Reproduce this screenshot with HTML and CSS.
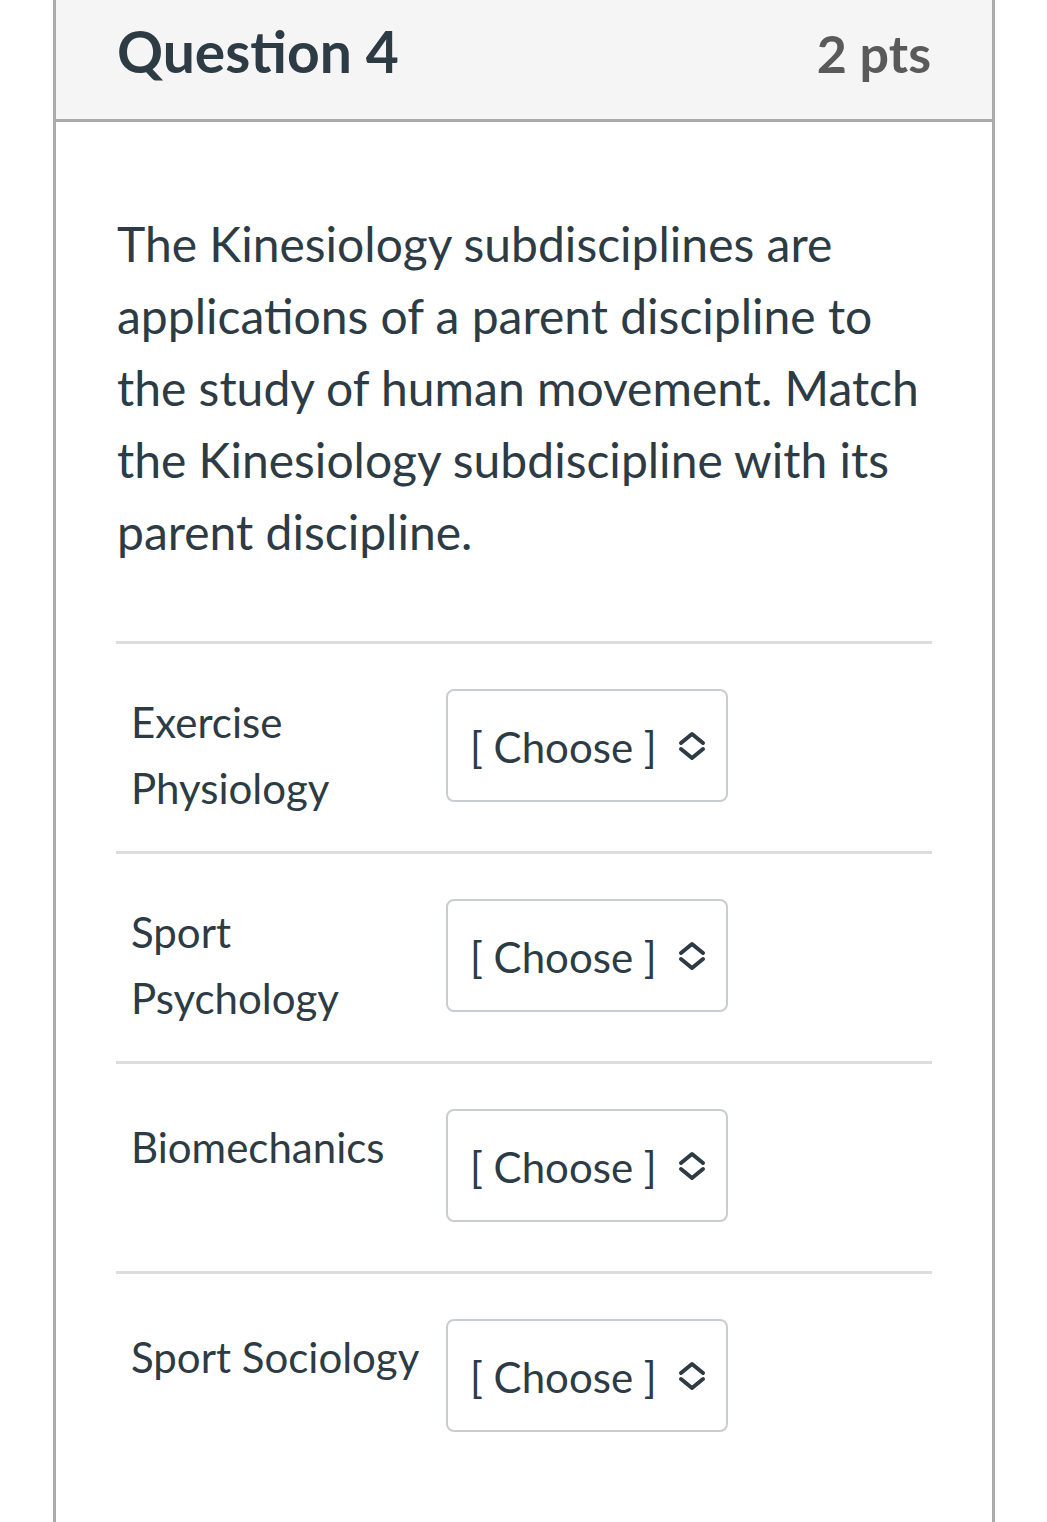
FILE: index.html
```html
<!DOCTYPE html>
<html lang="en">
<head>
<meta charset="utf-8">
<title>Question 4</title>
<link rel="stylesheet" href="styles.css">
</head>
<body>
<div class="question">
  <div class="q-header">
    <h2 class="q-title">Question 4</h2>
    <div class="q-points">2 pts</div>
  </div>
  <div class="q-body">
    <p class="q-text">The Kinesiology subdisciplines are applications of a parent discipline to the study of human movement. Match the Kinesiology subdiscipline with its parent discipline.</p>
    <div class="answers">
      <div class="answer">
        <div class="answer-label">Exercise Physiology</div>
        <div class="select"><span class="select-text">[ Choose ]</span><svg class="chev" viewBox="0 0 28 30" width="28" height="30"><path d="M3 12 L14 3 L25 12 M3 18 L14 27 L25 18" fill="none" stroke="#2d3b45" stroke-width="4" stroke-linecap="round" stroke-linejoin="round"/></svg></div>
      </div>
      <div class="answer">
        <div class="answer-label">Sport Psychology</div>
        <div class="select"><span class="select-text">[ Choose ]</span><svg class="chev" viewBox="0 0 28 30" width="28" height="30"><path d="M3 12 L14 3 L25 12 M3 18 L14 27 L25 18" fill="none" stroke="#2d3b45" stroke-width="4" stroke-linecap="round" stroke-linejoin="round"/></svg></div>
      </div>
      <div class="answer">
        <div class="answer-label single">Biomechanics</div>
        <div class="select"><span class="select-text">[ Choose ]</span><svg class="chev" viewBox="0 0 28 30" width="28" height="30"><path d="M3 12 L14 3 L25 12 M3 18 L14 27 L25 18" fill="none" stroke="#2d3b45" stroke-width="4" stroke-linecap="round" stroke-linejoin="round"/></svg></div>
      </div>
      <div class="answer">
        <div class="answer-label single">Sport Sociology</div>
        <div class="select"><span class="select-text">[ Choose ]</span><svg class="chev" viewBox="0 0 28 30" width="28" height="30"><path d="M3 12 L14 3 L25 12 M3 18 L14 27 L25 18" fill="none" stroke="#2d3b45" stroke-width="4" stroke-linecap="round" stroke-linejoin="round"/></svg></div>
      </div>
    </div>
  </div>
</div>
</body>
</html>
```
FILE: styles.css
```css
html, body {
  margin: 0;
  padding: 0;
  background: #ffffff;
}
body {
  font-family: Lato, "Noto Sans", sans-serif;
  color: #2d3b45;
}
.question {
  margin-left: 53px;
  width: 936px;
  min-height: 1522px;
  border-left: 3px solid #aaaaaa;
  border-right: 3px solid #aaaaaa;
  box-sizing: content-box;
}
.q-header {
  display: flex;
  justify-content: space-between;
  align-items: baseline;
  background: #f5f5f5;
  border-bottom: 3px solid #aaaaaa;
  box-sizing: border-box;
  height: 122px;
  padding: 17px 61px 0 61px;
}
.q-title {
  margin: 0;
  font-size: 57px;
  font-weight: 700;
  line-height: 1.2;
  color: #2d3b45;
}
.q-points {
  font-size: 52px;
  font-weight: 700;
  line-height: 1.2;
  color: #5a5a5a;
}
.q-body {
  padding: 86px 60px 0 60px;
}
.q-text {
  margin: 0 0 73px 1px;
  font-size: 48px;
  line-height: 72px;
}
.answer {
  display: flex;
  align-items: flex-start;
  border-top: 3px solid #dddddd;
  padding: 45px 0 47px 15px;
  height: 210px;
  box-sizing: border-box;
}
.answer-label {
  width: 298px;
  font-size: 42px;
  line-height: 66px;
}
.answer-label.single {
  padding-top: 5px;
}
.select {
  margin-left: 17px;
  display: flex;
  align-items: center;
  width: 282px;
  height: 113px;
  box-sizing: border-box;
  border: 2px solid #c7cdd1;
  border-radius: 8px;
  padding: 3px 0 0 22px;
}
.select-text {
  font-size: 42px;
  white-space: pre;
}
.chev {
  margin-left: 21px;
  margin-top: -2px;
}
```
